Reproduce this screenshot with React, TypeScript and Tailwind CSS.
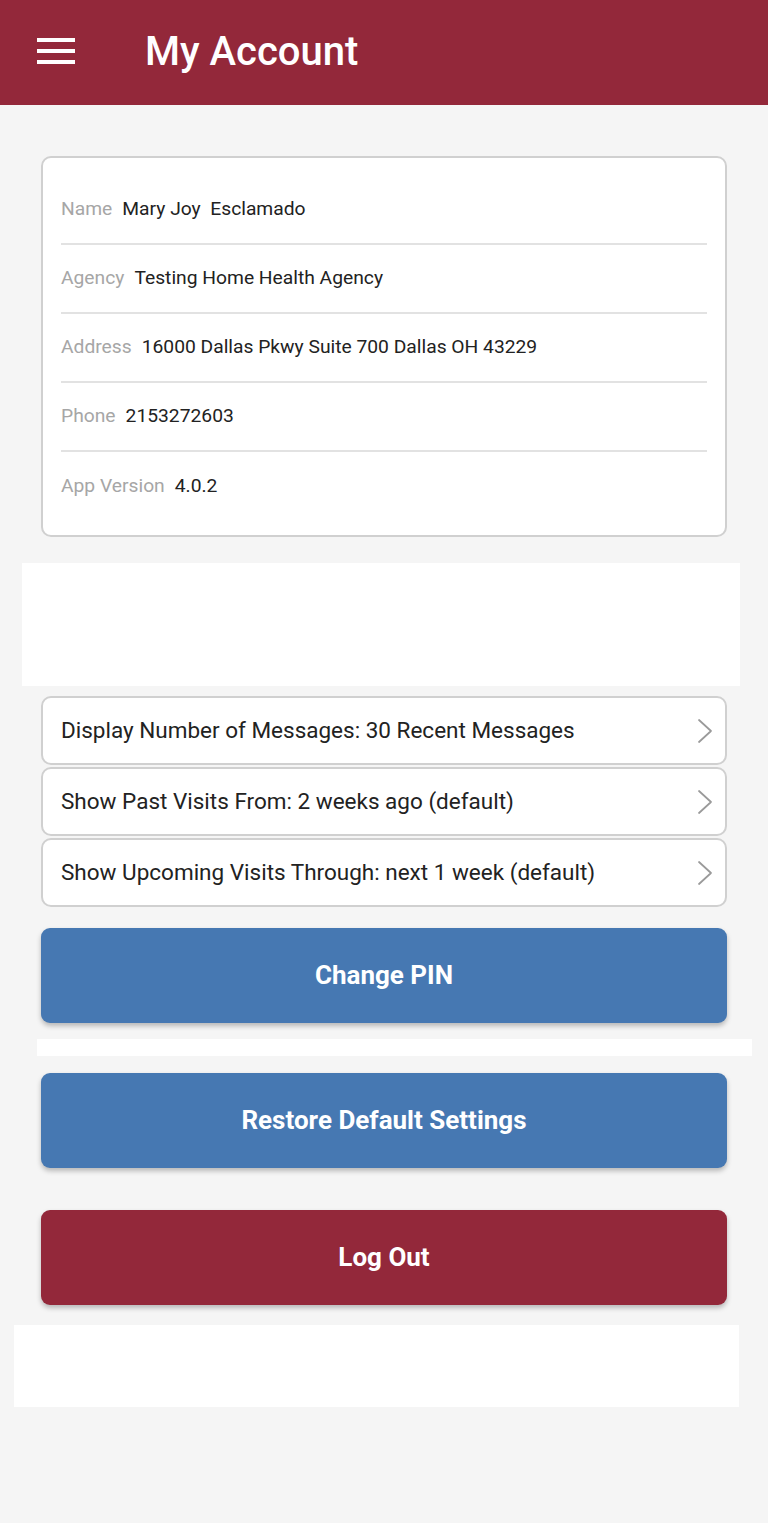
import React from 'react';

const profile = [
  { label: 'Name', value: 'Mary Joy\u00a0 Esclamado' },
  { label: 'Agency', value: 'Testing Home Health Agency' },
  { label: 'Address', value: '16000 Dallas Pkwy Suite 700 Dallas OH 43229' },
  { label: 'Phone', value: '2153272603' },
  { label: 'App Version', value: '4.0.2' },
];

const settings = [
  'Display Number of Messages: 30 Recent Messages',
  'Show Past Visits From: 2 weeks ago (default)',
  'Show Upcoming Visits Through: next 1 week (default)',
];

const Chevron = () => (
  <svg width="16" height="26" viewBox="0 0 16 26" fill="none" className="shrink-0">
    <path d="M2 2l12 11L2 24" stroke="#9a9a9a" strokeWidth="1.75" strokeLinejoin="round" strokeLinecap="round" />
  </svg>
);

const ActionButton: React.FC<{ label: string; color: string }> = ({ label, color }) => (
  <button
    className={`ml-[41px] w-[686px] h-[95px] rounded-[9px] ${color} text-white text-[26px] font-bold shadow-[0_3px_5px_rgba(0,0,0,0.25)] flex items-center justify-center`}
  >
    {label}
  </button>
);

export default function App() {
  return (
    <div className="w-[768px] min-h-[1523px] bg-[#f5f5f5] font-['Roboto',sans-serif]">
      {/* header */}
      <header className="h-[105px] bg-[#93283a] flex items-center">
        <div className="ml-[37px] w-[38px] flex flex-col gap-[7px] mt-[-4px]">
          <span className="block h-[4px] bg-white" />
          <span className="block h-[4px] bg-white" />
          <span className="block h-[4px] bg-white" />
        </div>
        <h1 className="ml-[70px] text-white text-[40px] font-medium leading-none mt-[-2px]">My Account</h1>
      </header>

      {/* profile card */}
      <div className="ml-[41px] mt-[51px] w-[686px] h-[381px] bg-white border-2 border-[#d0d0d0] rounded-[10px] pt-[18px] px-[18px]">
        {profile.map((row, i) => (
          <div
            key={row.label}
            className={`h-[69px] flex items-center text-[19.25px] ${i < profile.length - 1 ? 'border-b-2 border-[#e2e2e2]' : ''}`}
          >
            <span className="text-[#a6a6a6]">{row.label}</span>
            <span className="ml-[10px] text-[#222]">{row.value}</span>
          </div>
        ))}
      </div>

      {/* empty white panel */}
      <div className="ml-[22px] mt-[26px] w-[718px] h-[123px] bg-white" />

      {/* settings rows */}
      <div className="mt-[10px] flex flex-col gap-[2px]">
        {settings.map(s => (
          <div
            key={s}
            className="ml-[41px] w-[686px] h-[69px] bg-white border-2 border-[#d0d0d0] rounded-[10px] flex items-center justify-between pl-[18px] pr-[12px]"
          >
            <span className="text-[22.5px] text-[#222]">{s}</span>
            <Chevron />
          </div>
        ))}
      </div>

      <div className="mt-[21px]">
        <ActionButton label="Change PIN" color="bg-[#4678b2]" />
      </div>

      <div className="ml-[37px] mt-[16px] w-[715px] h-[17px] bg-white" />

      <div className="mt-[17px]">
        <ActionButton label="Restore Default Settings" color="bg-[#4678b2]" />
      </div>

      <div className="mt-[42px]">
        <ActionButton label="Log Out" color="bg-[#93283a]" />
      </div>

      <div className="ml-[14px] mt-[20px] w-[725px] h-[82px] bg-white" />
    </div>
  );
}
